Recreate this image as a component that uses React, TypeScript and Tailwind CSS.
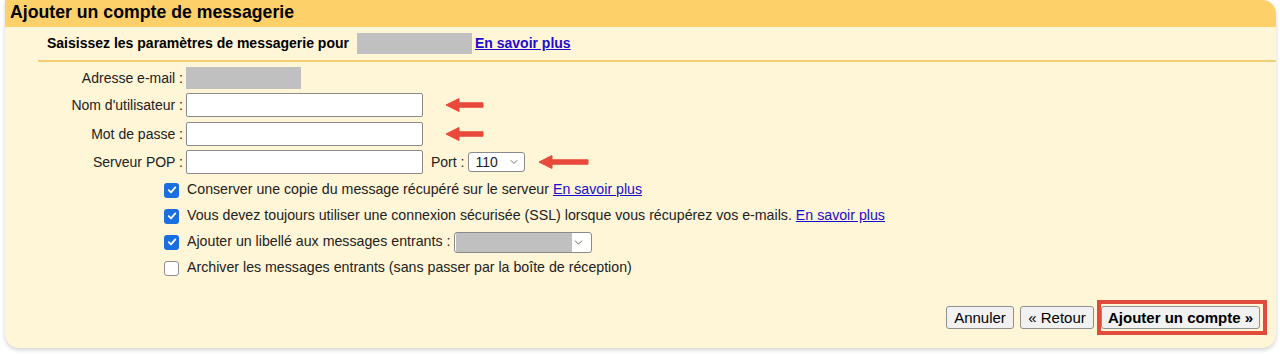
import { ChevronDown } from 'lucide-react';

const font = { fontFamily: '"Liberation Sans", Arial, sans-serif' };

function Arrow({ w = 38 }: { w?: number }) {
  return (
    <svg width={w + 2} height="16" viewBox={`0 0 ${w + 2} 16`} className="shrink-0">
      <path d={`M1 8 L14 1.5 L14 5.8 L${w} 5.8 L${w} 10.2 L14 10.2 L14 14.5 Z`} fill="#e8493a" stroke="#e8493a" strokeWidth="1" strokeLinejoin="round" />
    </svg>
  );
}

function Check({ on }: { on: boolean }) {
  return on ? (
    <span className="flex h-[15px] w-[15px] shrink-0 items-center justify-center rounded-[3px] bg-[#1a6fe0]">
      <svg width="10" height="10" viewBox="0 0 10 10">
        <path d="M1.8 5.2 L4 7.4 L8.3 2.4" stroke="white" strokeWidth="1.8" fill="none" strokeLinecap="round" strokeLinejoin="round" />
      </svg>
    </span>
  ) : (
    <span className="h-[15px] w-[15px] shrink-0 rounded-[3px] border border-[#8f8f8f] bg-white" />
  );
}

function Field() {
  return <div className="h-[24px] w-[237px] rounded-[2px] border border-[#8a8a8a] bg-white" />;
}

const checks = [
  { on: true, text: 'Conserver une copie du message récupéré sur le serveur', link: true },
  { on: true, text: 'Vous devez toujours utiliser une connexion sécurisée (SSL) lorsque vous récupérez vos e-mails.', link: true },
  { on: true, text: 'Ajouter un libellé aux messages entrants :', select: true },
  { on: false, text: 'Archiver les messages entrants (sans passer par la boîte de réception)' },
];

export default function App() {
  return (
    <div className="h-[356px] w-[1280px] bg-white pl-[5px] pr-[4px]" style={font}>
      <div className="flex h-[348px] flex-col overflow-hidden rounded-b-[14px] rounded-tr-[14px] bg-[#fff5d7] shadow-[0_2px_4px_rgba(0,0,0,0.18)]">
        {/* Header */}
        <div className="h-[27px] bg-[#fdd06a] pl-[5px] text-[17.7px] font-bold leading-[25px] text-black">
          Ajouter un compte de messagerie
        </div>

        <div className="flex items-center pl-[42px] pt-[6px] text-[14px] font-bold text-black">
          <span>Saisissez les paramètres de messagerie pour</span>
          <span className="ml-[8px] h-[21px] w-[115px] bg-[#c0c0c0]" />
          <a className="ml-[3px] text-[#1a0dcc] underline">En savoir plus</a>
        </div>
        <div className="ml-[33px] mt-[6px] h-[2px] bg-[#f2cd72]" />

        {/* Form */}
        <div className="grid grid-cols-[178px_auto] items-center gap-x-[3px] pt-[5px] text-[14px] text-[#222]">
          <span className="text-right">Adresse e-mail :</span>
          <span className="h-[22px] w-[115px] bg-[#c0c0c0]" />

          <span className="mt-[4px] text-right">Nom d'utilisateur :</span>
          <div className="mt-[4px] flex items-center gap-[22px]">
            <Field />
            <Arrow />
          </div>

          <span className="mt-[5px] text-right">Mot de passe :</span>
          <div className="mt-[5px] flex items-center gap-[22px]">
            <Field />
            <Arrow />
          </div>

          <span className="mt-[4px] text-right">Serveur POP :</span>
          <div className="mt-[4px] flex items-center">
            <Field />
            <span className="ml-[8px]">Port :</span>
            <div className="ml-[4px] flex h-[20px] w-[57px] items-center justify-between rounded-[3px] border border-[#8a8a8a] bg-white pl-[6px] pr-[4px]">
              <span>110</span>
              <ChevronDown size={12} strokeWidth={1.5} className="text-[#444]" />
            </div>
            <span className="ml-[13px] flex">
              <Arrow w={50} />
            </span>
          </div>
        </div>

        <div className="flex flex-col gap-[10px] pl-[159px] pt-[8px] text-[14.2px] text-[#222]">
          {checks.map((c) => (
            <div key={c.text} className="flex h-[16px] items-center">
              <Check on={c.on} />
              <span className="ml-[8px]">{c.text}</span>
              {c.link && <a className="ml-[4px] text-[#1a0dcc] underline">En savoir plus</a>}
              {c.select && (
                <div className="ml-[4px] flex h-[21px] w-[138px] items-center rounded-[3px] border border-[#8a8a8a] bg-white pl-[1px] pr-[6px]">
                  <span className="h-[19px] w-[116px] bg-[#c0c0c0]" />
                  <ChevronDown size={13} strokeWidth={1.5} className="ml-auto text-[#444]" />
                </div>
              )}
            </div>
          ))}
        </div>

        {/* Buttons */}
        <div className="mt-auto flex items-center justify-end pb-[13px] pr-[9px] text-[15px] text-black">
          <button className="h-[23px] w-[68px] rounded-[3px] border border-[#8f8f8f] bg-[#f1f1f1]">Annuler</button>
          <button className="ml-[6px] h-[23px] w-[74px] rounded-[3px] border border-[#8f8f8f] bg-[#f1f1f1]">« Retour</button>
          <div className="ml-[3px] flex border-[4px] border-[#e04b3b] py-[2px] pr-[3px]">
            <button className="h-[23px] w-[159px] rounded-[3px] border border-[#8f8f8f] bg-[#f1f1f1] font-bold">
              Ajouter un compte »
            </button>
          </div>
        </div>
      </div>
    </div>
  );
}
